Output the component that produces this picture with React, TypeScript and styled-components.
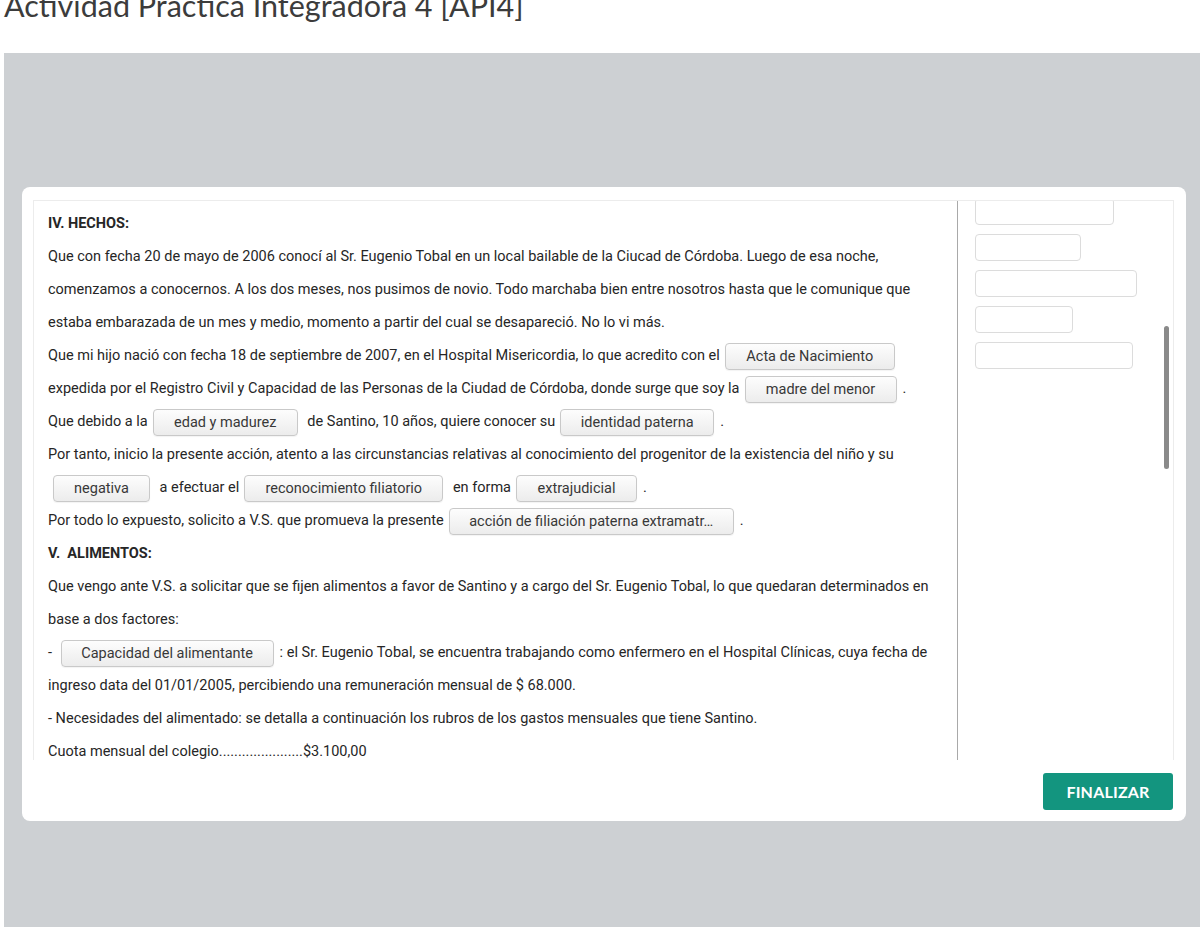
import { useLayoutEffect, useRef } from "react";
import styled, { createGlobalStyle } from "styled-components";

const GlobalStyle = createGlobalStyle`
  body {
    margin: 0;
    background: #fff;
    font-family: Roboto, "Liberation Sans", sans-serif;
  }
`;

const Page = styled.div`
  height: 927px;
  overflow: hidden;
  padding-left: 4px;
`;

const Title = styled.h1`
  margin: -10px 0 32px 0;
  font-family: Lato, "Liberation Sans", sans-serif;
  font-weight: 400;
  font-size: 30.5px;
  line-height: 31px;
  color: #3c3c3c;
  white-space: nowrap;
`;

const Stage = styled.div`
  background: #cdd0d3;
  padding: 134px 14px 120px 18px;
`;

const Card = styled.div`
  background: #fff;
  border-radius: 8px;
  padding: 13px 12px 11px 11px;
`;

const Workspace = styled.div`
  display: flex;
  height: 559px;
  border: 1px solid #ececec;
  border-bottom: none;
`;

const TextPanel = styled.div`
  flex: 1;
  padding: 6px 0 0 14px;
  overflow: hidden;
  border-right: 1px solid #a9a9a9;
  color: #262626;
  font-size: 14.5px;
`;

const Line = styled.div`
  height: 33px;
  line-height: 33px;
  white-space: nowrap;
`;

const Heading = styled(Line)`
  font-weight: 700;
`;

const Blank = styled.span<{ $w: number }>`
  display: inline-block;
  box-sizing: border-box;
  width: ${({ $w }) => $w}px;
  height: 27px;
  line-height: 25px;
  margin: 0 6px 0 5px;
  padding: 0 10px;
  vertical-align: middle;
  text-align: center;
  white-space: nowrap;
  color: #383838;
  border: 1px solid #c9c9c9;
  border-radius: 4px;
  background: linear-gradient(#fdfdfd, #ececec);
  box-shadow: 0 1px 1px rgba(0, 0, 0, 0.05);
`;

const OptionsPanel = styled.div`
  width: 215px;
  position: relative;
`;

const Scroller = styled.div`
  height: 559px;
  overflow: hidden;
`;

const OptionList = styled.div`
  display: flex;
  flex-direction: column;
  align-items: flex-start;
  gap: 9px;
  padding: 10px 17px 600px;
`;

const Slot = styled.div<{ $w: number }>`
  flex: none;
  box-sizing: border-box;
  width: ${({ $w }) => $w}px;
  height: 27px;
  border: 1px solid #dcdcdc;
  border-radius: 4px;
  background: #fff;
`;

const Thumb = styled.div`
  position: absolute;
  right: 4px;
  top: 125px;
  width: 5px;
  height: 143px;
  border-radius: 3px;
  background: #8a8a8a;
`;

const Footer = styled.div`
  display: flex;
  justify-content: flex-end;
  padding: 13px 1px 0 0;
`;

const FinishButton = styled.button`
  width: 130px;
  height: 37px;
  border: none;
  border-radius: 3px;
  background: #13957f;
  color: #fff;
  font-family: Lato, "Liberation Sans", sans-serif;
  font-weight: 700;
  font-size: 16px;
  letter-spacing: 0.2px;
  cursor: pointer;
`;

const slots = [139, 106, 162, 98, 158];

export default function App() {
  const scrollRef = useRef<HTMLDivElement>(null);

  useLayoutEffect(() => {
    if (scrollRef.current) scrollRef.current.scrollTop = 13;
  }, []);

  return (
    <Page>
      <GlobalStyle />
      <Title>Actividad Practica Integradora 4 [API4]</Title>
      <Stage>
        <Card>
          <Workspace>
            <TextPanel>
              <Heading>IV. HECHOS:</Heading>
              <Line>
                Que con fecha 20 de mayo de 2006 conocí al Sr. Eugenio Tobal en un local bailable de la Ciucad de Córdoba. Luego de esa noche,
              </Line>
              <Line>
                comenzamos a conocernos. A los dos meses, nos pusimos de novio. Todo marchaba bien entre nosotros hasta que le comunique que
              </Line>
              <Line>
                estaba embarazada de un mes y medio, momento a partir del cual se desapareció. No lo vi más.
              </Line>
              <Line>
                Que mi hijo nació con fecha 18 de septiembre de 2007, en el Hospital Misericordia, lo que acredito con el
                <Blank $w={170}>Acta de Nacimiento</Blank>
              </Line>
              <Line>
                expedida por el Registro Civil y Capacidad de las Personas de la Ciudad de Córdoba, donde surge que soy la
                <Blank $w={152}>madre del menor</Blank>.
              </Line>
              <Line>
                Que debido a la<Blank $w={145}>edad y madurez</Blank> de Santino, 10 años, quiere conocer su
                <Blank $w={154}>identidad paterna</Blank>.
              </Line>
              <Line>
                Por tanto, inicio la presente acción, atento a las circunstancias relativas al conocimiento del progenitor de la existencia del niño y su
              </Line>
              <Line>
                <Blank $w={97}>negativa</Blank> a efectuar el<Blank $w={199}>reconocimiento filiatorio</Blank> en forma
                <Blank $w={121}>extrajudicial</Blank>.
              </Line>
              <Line>
                Por todo lo expuesto, solicito a V.S. que promueva la presente
                <Blank $w={285}>acción de filiación paterna extramatr…</Blank>.
              </Line>
              <Heading>V.&nbsp; ALIMENTOS:</Heading>
              <Line>
                Que vengo ante V.S. a solicitar que se fijen alimentos a favor de Santino y a cargo del Sr. Eugenio Tobal, lo que quedaran determinados en
              </Line>
              <Line>base a dos factores:</Line>
              <Line>
                - <Blank $w={213}>Capacidad del alimentante</Blank>: el Sr. Eugenio Tobal, se encuentra trabajando como enfermero en el Hospital Clínicas, cuya fecha de
              </Line>
              <Line>ingreso data del 01/01/2005, percibiendo una remuneración mensual de $ 68.000.</Line>
              <Line>
                - Necesidades del alimentado: se detalla a continuación los rubros de los gastos mensuales que tiene Santino.
              </Line>
              <Line>Cuota mensual del colegio......................$3.100,00</Line>
            </TextPanel>
            <OptionsPanel>
              <Scroller ref={scrollRef}>
                <OptionList>
                  {slots.map((w, i) => (
                    <Slot key={i} $w={w} />
                  ))}
                </OptionList>
              </Scroller>
              <Thumb />
            </OptionsPanel>
          </Workspace>
          <Footer>
            <FinishButton>FINALIZAR</FinishButton>
          </Footer>
        </Card>
      </Stage>
    </Page>
  );
}
